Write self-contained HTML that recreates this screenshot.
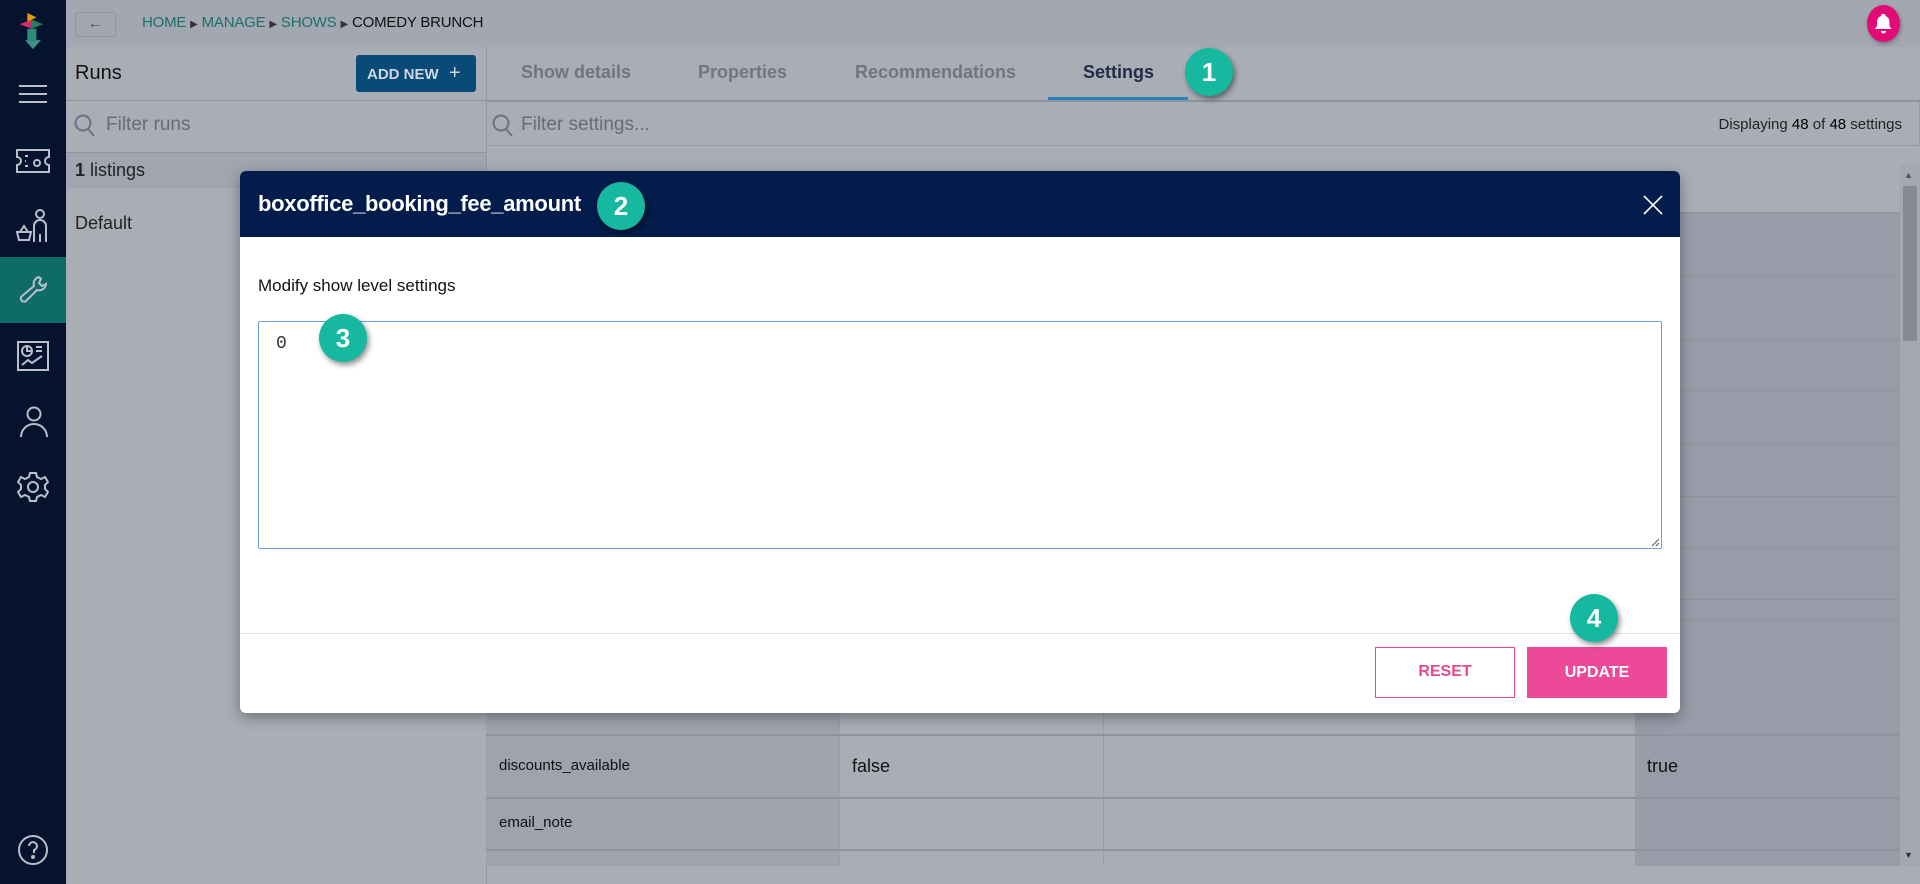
<!DOCTYPE html>
<html><head><meta charset="utf-8"><style>
*{box-sizing:border-box;margin:0;padding:0}
body{width:1920px;height:884px;overflow:hidden;background:#a9adb5;font-family:"Liberation Sans",Arial,sans-serif;position:relative;color:#222}
.abs{position:absolute}
.side{left:0;top:0;width:66px;height:884px;background:#06132e}
.top{left:66px;top:0;width:1854px;height:47px;background:#a2a7b1}
.circ{position:absolute;width:48px;height:48px;border-radius:50%;background:#16b8a0;color:#fff;font-weight:bold;font-size:26px;display:flex;align-items:center;justify-content:center;box-shadow:2px 3px 6px rgba(0,0,0,.45)}
.hl{position:absolute;height:1px;background:#8e939e}
.vl{position:absolute;width:1px;background:#999ea8}
svg{position:absolute}
</style></head><body>
<div class="abs side"></div>
<!-- logo -->
<svg style="left:16px;top:10px" width="34" height="42" viewBox="0 0 30 36"><polygon points="10,2 18,6 10,10" fill="#e0a100"/><polygon points="3,12 14,8 14,16" fill="#d02d6a"/><polygon points="14,8 24,12 14,16" fill="#2e7a5e"/><polygon points="10,16 18,16 18,26 10,26" fill="#2b8f78"/><polygon points="8,26 22,26 15,34" fill="#3d8f8a"/></svg>
<!-- hamburger -->
<svg style="left:19px;top:84px" width="28" height="20"><path d="M0 2H28M0 10H28M0 18H28" stroke="#b9bec9" stroke-width="2"/></svg>
<!-- ticket -->
<svg style="left:15px;top:148px" width="36" height="26" viewBox="0 0 36 26" fill="none" stroke="#b9bec9" stroke-width="2"><path d="M2 2H34V9A4 4 0 0 0 34 17V24H2V17A4 4 0 0 0 2 9Z"/><path d="M10 8h3M10 13h1M10 18h3"/><circle cx="22" cy="15" r="3"/></svg>
<!-- person basket -->
<svg style="left:15px;top:208px" width="36" height="36" viewBox="0 0 36 36" fill="none" stroke="#b9bec9" stroke-width="2"><circle cx="25" cy="6" r="4"/><path d="M19 34V18a6 6 0 0 1 12 0v16M25 26v8"/><path d="M2 24h14l-2 8H4zM5 24l4-6 4 6"/></svg>
<div class="abs" style="left:0;top:257px;width:66px;height:66px;background:#0e6b68"></div>
<svg style="left:17px;top:274px" width="32" height="32" viewBox="0 0 32 32" fill="none" stroke="#b9bec9" stroke-width="2"><path d="M22 3a7 7 0 0 0-5 9L5 22a3 3 0 0 0 4 5l11-11a7 7 0 0 0 9-6l-4 2-3-3 2-4z"/></svg>
<svg style="left:17px;top:341px" width="32" height="30" viewBox="0 0 32 30" fill="none" stroke="#b9bec9" stroke-width="2"><rect x="1" y="1" width="30" height="28"/><circle cx="10" cy="10" r="5"/><path d="M10 5v5h5M19 6h6M19 10h6M5 24l6-5 4 3 10-7"/></svg>
<svg style="left:19px;top:406px" width="30" height="32" viewBox="0 0 30 32" fill="none" stroke="#b9bec9" stroke-width="2"><circle cx="15" cy="8" r="6.5"/><path d="M2 31a13 13 0 0 1 26 0"/></svg>
<svg style="left:17px;top:471px" width="32" height="32" viewBox="0 0 32 32" fill="none" stroke="#b9bec9" stroke-width="2"><circle cx="16" cy="16" r="5"/><path d="M13 2h6l1 4 4 2 4-2 3 5-3 3v4l3 3-3 5-4-2-4 2-1 4h-6l-1-4-4-2-4 2-3-5 3-3v-4l-3-3 3-5 4 2 4-2z"/></svg>
<svg style="left:17px;top:834px" width="32" height="32" viewBox="0 0 32 32" fill="none" stroke="#b9bec9" stroke-width="2"><circle cx="16" cy="16" r="14"/><path d="M12 12a4 4 0 1 1 5 4v3"/><circle cx="16" cy="23" r="1" fill="#b9bec9"/></svg>

<div class="abs top"></div>
<div class="abs" style="left:75px;top:12px;width:41px;height:25px;border:1px solid #8f949e;border-radius:3px;color:#555;font-size:16px;text-align:center;line-height:22px">←</div>
<div class="abs" style="left:142px;top:14px;font-size:15px;color:#1f6f6a;letter-spacing:-.2px">HOME <span style="color:#333;font-size:10px">▶</span> MANAGE <span style="color:#333;font-size:10px">▶</span> SHOWS <span style="color:#333;font-size:10px">▶</span> <span style="color:#111">COMEDY BRUNCH</span></div>
<div class="abs" style="left:1867px;top:5px;width:33px;height:37px;border-radius:50%;background:#e20a74;box-shadow:1px 2px 4px rgba(0,0,0,.3)"></div>
<svg style="left:1875px;top:13px" width="17" height="21" viewBox="0 0 17 21"><path d="M8.5 1a2 2 0 0 1 2 2 6 6 0 0 1 4 6v4l2 3H0l2-3V9a6 6 0 0 1 4-6 2 2 0 0 1 2.5-2zM6 18h5a2.5 2.5 0 0 1-5 0z" fill="#fff"/></svg>

<!-- runs panel -->
<div class="abs" style="left:75px;top:62px;font-size:20px;color:#111">Runs</div>
<div class="abs" style="left:356px;top:55px;width:120px;height:37px;background:#0a4a78;border-radius:3px;color:#d0d7e0;font-weight:bold;font-size:15px;line-height:37px;padding-left:11px">ADD NEW <span style="font-weight:normal;font-size:20px;margin-left:6px">+</span></div>
<div class="hl" style="left:66px;top:100px;width:420px"></div>
<svg style="left:74px;top:114px" width="22" height="24" fill="none" stroke="#6b7180" stroke-width="2"><circle cx="9" cy="9" r="7.5"/><path d="M14 15l6 7"/></svg>
<div class="abs" style="left:106px;top:114px;font-size:19px;color:#666c78">Filter runs</div>
<div class="hl" style="left:66px;top:152px;width:420px"></div>
<div class="abs" style="left:66px;top:153px;width:420px;height:35px;background:#a0a5af"></div>
<div class="abs" style="left:75px;top:160px;font-size:18px;color:#222"><b>1</b> listings</div>
<div class="abs" style="left:75px;top:213px;font-size:18px;color:#222">Default</div>
<div class="vl" style="left:486px;top:47px;height:837px;background:#9297a2"></div>

<!-- tabs -->
<div class="abs" style="left:521px;top:62px;font-size:18px;color:#6f7581;font-weight:bold">Show details</div>
<div class="abs" style="left:698px;top:62px;font-size:18px;color:#6f7581;font-weight:bold">Properties</div>
<div class="abs" style="left:855px;top:62px;font-size:18px;color:#6f7581;font-weight:bold">Recommendations</div>
<div class="abs" style="left:1083px;top:62px;font-size:18px;color:#232b45;font-weight:bold">Settings</div>
<div class="abs" style="left:1048px;top:97px;width:140px;height:3px;background:#2a82b8"></div>
<div class="hl" style="left:487px;top:100px;width:1433px;height:2px"></div>
<div class="circ" style="left:1185px;top:48px">1</div>
<div class="abs" style="left:488px;top:102px;width:1432px;height:44px;border-bottom:1px solid #959aa5;border-right:1px solid #959aa5"></div>
<svg style="left:492px;top:114px" width="22" height="24" fill="none" stroke="#6b7180" stroke-width="2"><circle cx="9" cy="9" r="7.5"/><path d="M14 15l6 7"/></svg>
<div class="abs" style="left:521px;top:114px;font-size:19px;color:#666c78">Filter settings...</div>
<div class="abs" style="right:18px;top:116px;font-size:15px;color:#222">Displaying <span style="color:#000">48</span> of <span style="color:#000">48</span> settings</div>

<!-- table -->
<div class="abs" style="left:486px;top:212px;width:353px;height:654px;background:#9ea3ad"></div>
<div class="abs" style="left:1635px;top:212px;width:265px;height:654px;background:#979ca8"></div>
<div class="hl" style="left:486px;top:212px;width:1414px"></div>
<div class="vl" style="left:839px;top:212px;height:654px"></div>
<div class="vl" style="left:1103px;top:212px;height:654px"></div>
<div class="hl" style="left:486px;top:275px;width:1414px"></div>
<div class="hl" style="left:486px;top:339px;width:1414px"></div>
<div class="hl" style="left:486px;top:390px;width:1414px"></div>
<div class="hl" style="left:486px;top:443px;width:1414px"></div>
<div class="hl" style="left:486px;top:496px;width:1414px"></div>
<div class="hl" style="left:486px;top:547px;width:1414px"></div>
<div class="hl" style="left:486px;top:599px;width:1414px"></div>
<div class="hl" style="left:486px;top:620px;width:1414px"></div>
<div class="hl" style="left:486px;top:734px;width:1414px;height:2px"></div>
<div class="hl" style="left:486px;top:797px;width:1414px;height:2px"></div>
<div class="hl" style="left:486px;top:849px;width:1414px;height:2px"></div>
<div class="abs" style="left:1639px;top:177px;font-size:19px;color:#333">w</div>
<div class="abs" style="left:499px;top:757px;font-size:15px;color:#111">discounts_available</div>
<div class="abs" style="left:852px;top:756px;font-size:18px;color:#111">false</div>
<div class="abs" style="left:1647px;top:756px;font-size:18px;color:#111">true</div>
<div class="abs" style="left:499px;top:814px;font-size:15px;color:#111">email_note</div>
<div class="abs" style="left:1900px;top:165px;width:20px;height:701px;background:#a4a8b0"></div>
<div class="abs" style="left:1903px;top:186px;width:14px;height:155px;background:#858a94"></div>
<div class="abs" style="left:1904px;top:170px;font-size:9px;color:#555">▲</div>
<div class="abs" style="left:1904px;top:850px;font-size:9px;color:#333">▼</div>

<!-- modal -->
<div class="abs" style="left:240px;top:171px;width:1440px;height:542px;background:#fff;border-radius:6px;box-shadow:0 4px 14px rgba(0,0,0,.35);overflow:hidden">
  <div style="height:66px;background:#031c4b;position:relative">
    <div class="abs" style="left:18px;top:20px;font-size:22px;color:#fff;font-weight:bold;letter-spacing:-.3px">boxoffice_booking_fee_amount</div>
    <svg style="left:1403px;top:24px" width="20" height="20"><path d="M1 1L19 19M19 1L1 19" stroke="#fff" stroke-width="1.6"/></svg>
  </div>
  <div class="abs" style="left:18px;top:105px;font-size:17px;color:#111">Modify show level settings</div>
  <div class="abs" style="left:18px;top:150px;width:1404px;height:228px;border:1px solid #6aa0e8;border-radius:2px"></div>
  <div class="abs" style="left:36px;top:163px;font-size:18px;color:#333;font-family:'Liberation Mono',monospace">0</div>
  <svg style="left:1411px;top:367px" width="9" height="9"><path d="M8 1L1 8M8 5L5 8" stroke="#555"/></svg>
  <div class="abs" style="left:0;top:462px;width:1440px;height:1px;background:#e2e2e2"></div>
  <div class="abs" style="left:1135px;top:476px;width:140px;height:51px;border:1.5px solid #e8488e;color:#e8488e;font-weight:bold;font-size:16px;text-align:center;line-height:48px">RESET</div>
  <div class="abs" style="left:1287px;top:476px;width:140px;height:51px;background:#ec4998;color:#fff;font-weight:bold;font-size:16px;text-align:center;line-height:51px">UPDATE</div>
</div>
<div class="circ" style="left:597px;top:182px">2</div>
<div class="circ" style="left:319px;top:314px">3</div>
<div class="circ" style="left:1570px;top:594px">4</div>
</body></html>
